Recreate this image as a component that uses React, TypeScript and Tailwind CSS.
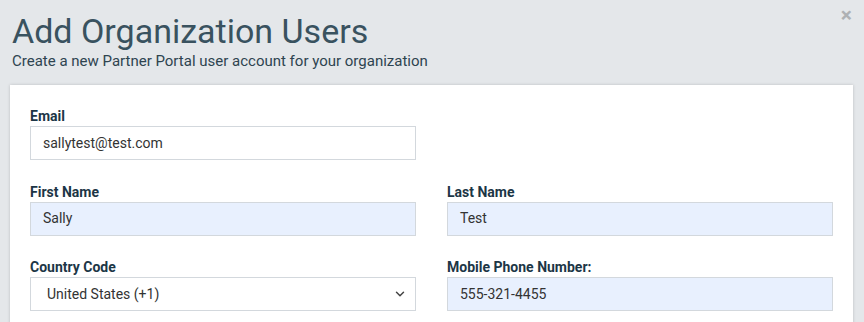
import { ChevronDown } from "lucide-react";

const font = { fontFamily: "Roboto, 'Liberation Sans', sans-serif" };

function Field({
  label,
  value,
  filled,
}: {
  label: string;
  value: string;
  filled?: boolean;
}) {
  return (
    <div className="flex flex-col">
      <label className="h-5 text-[14px] font-bold leading-5 text-[#1c3646]">{label}</label>
      <div
        className={`flex h-[34px] items-center border border-[#d3d8dd] px-3 text-[14px] text-[#333] ${
          filled ? "bg-[#e8f0fe]" : "bg-white"
        }`}
      >
        {value}
      </div>
    </div>
  );
}

export default function App() {
  return (
    <div className="h-[322px] w-[864px] overflow-hidden bg-[#e4e7ea]" style={font}>
      <div className="relative px-3 pt-[11px]">
        <h1 className="text-[34px] leading-[40px] text-[#39525f]">Add Organization Users</h1>
        <p className="text-[15px] leading-[21px] text-[#2e4450]">
          Create a new Partner Portal user account for your organization
        </p>
        <button className="absolute right-[12px] top-[3px] text-[21px] font-bold leading-[24px] text-[#aeb1b4]">
          ×
        </button>
      </div>
      <div className="ml-[10px] mt-[13px] w-[843px] bg-white px-5 pt-[21px] pb-6 shadow-[0_0_3px_rgba(0,0,0,0.18)]">
        <div className="grid grid-cols-2 gap-x-[31px] gap-y-[21.6px]">
          <Field label="Email" value="sallytest@test.com" />
          <div />
          <Field label="First Name" value="Sally" filled />
          <Field label="Last Name" value="Test" filled />
          <div className="flex flex-col">
            <label className="h-5 text-[14px] font-bold leading-5 text-[#1c3646]">Country Code</label>
            <div className="flex h-[34px] items-center justify-between border border-[#d3d8dd] bg-white pl-4 pr-2 text-[14px] text-[#333]">
              <span>United States (+1)</span>
              <ChevronDown size={14} strokeWidth={2.5} className="text-[#444]" />
            </div>
          </div>
          <Field label="Mobile Phone Number:" value="555-321-4455" filled />
        </div>
      </div>
    </div>
  );
}
